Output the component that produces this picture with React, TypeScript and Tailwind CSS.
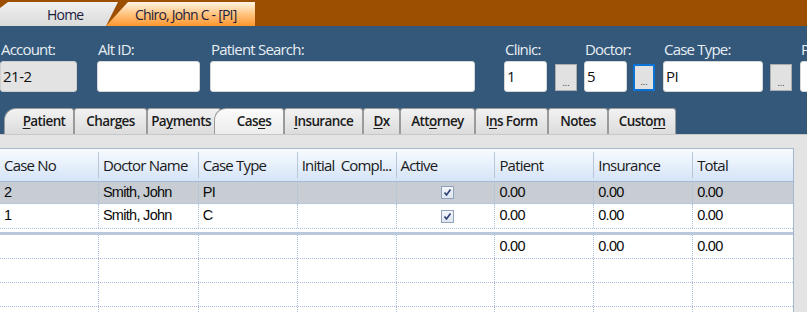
import React from "react";

const cols = [98, 100, 99, 99, 99, 99, 99, 101];

function U({ children }: { children: React.ReactNode }) {
  return <span className="underline underline-offset-2 decoration-1">{children}</span>;
}

function Check() {
  return (
    <div className="w-[13px] h-[13px] border border-[#8fa3bd] bg-gradient-to-b from-[#f4f6fa] to-[#dfe5ee] flex items-center justify-center">
      <svg width="9" height="9" viewBox="0 0 9 9">
        <path d="M1.5 4.5 L3.5 7 L7.5 1.5" stroke="#2b3f78" strokeWidth="1.6" fill="none" />
      </svg>
    </div>
  );
}

function DotsBtn({ focused }: { focused?: boolean }) {
  return (
    <div
      className={
        "h-[27px] w-[22px] bg-[#e1e1e1] flex items-end justify-center pb-[3px] text-[9px] leading-none text-[#333] " +
        (focused ? "border-2 border-[#0a74d6]" : "border border-[#adadad]")
      }
    >
      ...
    </div>
  );
}

function Field({
  label,
  width,
  value,
  gray,
  ml,
}: {
  label: string;
  width: number;
  value?: string;
  gray?: boolean;
  ml: string;
}) {
  return (
    <div className={"flex flex-col shrink-0 " + ml} style={{ width }}>
      <div className="h-[18px] leading-[18px] text-[15px] tracking-[-0.8px] text-[#e9eef4] pl-[1px] whitespace-nowrap">
        {label}
      </div>
      <div
        className={
          "mt-[3px] h-[31px] w-full rounded-[3px] border flex items-center pl-[2px] text-[15px] tracking-[-0.5px] text-[#111] " +
          (gray ? "bg-[#e3e3e3] border-[#cfcfcf]" : "bg-white border-[#d6d6d6]")
        }
      >
        {value}
      </div>
    </div>
  );
}

function Tab({
  children,
  w,
  cls = "",
  selected,
}: {
  children: React.ReactNode;
  w: number;
  cls?: string;
  selected?: boolean;
}) {
  return (
    <div
      className={
        "h-[26px] shrink-0 border border-b-0 border-[#9a9a9a] rounded-t-[3px] flex items-center justify-center text-[13.5px] font-semibold tracking-[-0.6px] text-[#1b1b1b] whitespace-nowrap " +
        (selected
          ? "bg-gradient-to-b from-[#fbfbfb] to-[#ececec] z-10 "
          : "bg-gradient-to-b from-[#f2f2f2] to-[#dcdcdc] ") +
        cls
      }
      style={{ width: w }}
    >
      {children}
    </div>
  );
}

function Cell({ i, children, className = "" }: { i: number; children?: React.ReactNode; className?: string }) {
  return (
    <div
      className={
        "h-full flex items-center pl-[4px] whitespace-nowrap " +
        (i > 0 ? "border-l border-dotted border-[#a9bfdc] " : "") +
        className
      }
      style={{ width: cols[i] }}
    >
      {children}
    </div>
  );
}

const dataFont = "font-['Liberation_Sans',Arial,sans-serif] text-[14.5px] tracking-[-0.7px] text-[#0a0a0a]";

function Row({ vals, bg, h = 23, check }: { vals: string[]; bg: string; h?: number; check?: boolean }) {
  return (
    <div className={"flex shrink-0 border-b border-dotted border-[#a9bfdc] " + bg + " " + dataFont} style={{ height: h }}>
      {cols.map((_, i) => (
        <Cell key={i} i={i} className={i === 4 && check ? "justify-center pl-0" : ""}>
          {i === 4 && check ? <Check /> : vals[i]}
        </Cell>
      ))}
    </div>
  );
}

export default function App() {
  const headers = ["Case No", "Doctor Name", "Case Type", "Initial  Compl...", "Active", "Patient", "Insurance", "Total"];
  return (
    <div className="w-[807px] h-[312px] overflow-hidden bg-[#e4e4e4] font-['Open_Sans',sans-serif]">
      {/* top document tabs */}
      <div className="h-[26px] bg-[#9c4f00] flex items-end">
        <div className="h-[24px] w-[118px] bg-gradient-to-b from-[#f1f1f1] to-[#dadada] [clip-path:polygon(8px_0,100%_0,calc(100%-12px)_100%,0_100%,0_6px)] flex items-center pl-[47px] text-[14px] tracking-[-0.8px] text-[#1c1c3c]">
          Home
        </div>
        <div className="h-[24px] w-[149px] -ml-[12px] bg-gradient-to-b from-[#fff4e4] via-[#ffc47e] to-[#ff9624] [clip-path:polygon(22px_0,100%_0,100%_100%,0_100%)] flex items-center pl-[29px] text-[14px] tracking-[-0.8px] text-[#1c1c3c] whitespace-nowrap">
          Chiro, John C - [PI]
        </div>
      </div>

      {/* blue panel */}
      <div className="h-[108px] bg-[#33587a] pt-[14px] flex flex-col">
        <div className="flex items-end">
          <Field label="Account:" width={77} value="21-2" gray ml="ml-0" />
          <Field label="Alt ID:" width={103} ml="ml-[20px]" />
          <Field label="Patient Search:" width={265} ml="ml-[10px]" />
          <Field label="Clinic:" width={43} value="1" ml="ml-[29px]" />
          <div className="ml-[8px] mb-[1px] shrink-0">
            <DotsBtn />
          </div>
          <Field label="Doctor:" width={43} value="5" ml="ml-[7px]" />
          <div className="ml-[6px] mb-[1px] shrink-0">
            <DotsBtn focused />
          </div>
          <Field label="Case Type:" width={100} value="PI" ml="ml-[8px]" />
          <div className="ml-[7px] mb-[1px] shrink-0">
            <DotsBtn />
          </div>
          <Field label="P" width={40} ml="ml-[8px]" />
        </div>

        <div className="mt-[16px] flex items-end pl-[4px]">
          <Tab w={70} cls="rounded-tl-[12px] pl-[10px]">
            <U>P</U>atient
          </Tab>
          <Tab w={73}>
            Char<U>g</U>es
          </Tab>
          <Tab w={74} cls="pr-[6px]">
            Pa<U>y</U>ments
          </Tab>
          <Tab w={70} selected cls="-ml-[7px] rounded-tl-[12px] pl-[10px]">
            Cas<U>e</U>s
          </Tab>
          <Tab w={79}>
            <U>I</U>nsurance
          </Tab>
          <Tab w={37}>
            <U>D</U>x
          </Tab>
          <Tab w={75}>
            Att<U>o</U>rney
          </Tab>
          <Tab w={73}>
            I<U>n</U>s Form
          </Tab>
          <Tab w={60}>Notes</Tab>
          <Tab w={68}>
            Custo<U>m</U>
          </Tab>
        </div>
      </div>

      {/* content */}
      <div className="border-t border-[#c8c8c8] pt-[13px]">
        <div className="w-[794px] h-[170px] bg-white border-r border-[#a3b6cf] flex flex-col">
          <div className="h-[34px] shrink-0 flex items-center bg-gradient-to-b from-[#f8fbff] to-[#d5e4f7] border-t border-b border-[#a7bad3] text-[15px] tracking-[-0.8px] text-[#1a1a1a]">
            {headers.map((h, i) => (
              <div
                key={i}
                className={"h-[26px] flex items-center pl-[4px] whitespace-pre " + (i > 0 ? "border-l border-[#b9c6d6]" : "")}
                style={{ width: cols[i] }}
              >
                {h}
              </div>
            ))}
          </div>
          <Row vals={["2", "Smith, John", "PI", "", "", "0.00", "0.00", "0.00"]} bg="bg-[#c8cdd4]" h={22} check />
          <Row vals={["1", "Smith, John", "C", "", "", "0.00", "0.00", "0.00"]} bg="bg-white" h={25} check />
          <div className="h-[6px] shrink-0 bg-white border-b-[3px] border-[#b9c8dc]" />
          <Row vals={["", "", "", "", "", "0.00", "0.00", "0.00"]} bg="bg-white" h={24} />
          <Row vals={["", "", "", "", "", "", "", ""]} bg="bg-white" h={24} />
          <Row vals={["", "", "", "", "", "", "", ""]} bg="bg-white" h={24} />
          <Row vals={["", "", "", "", "", "", "", ""]} bg="bg-white" h={24} />
        </div>
      </div>
    </div>
  );
}
